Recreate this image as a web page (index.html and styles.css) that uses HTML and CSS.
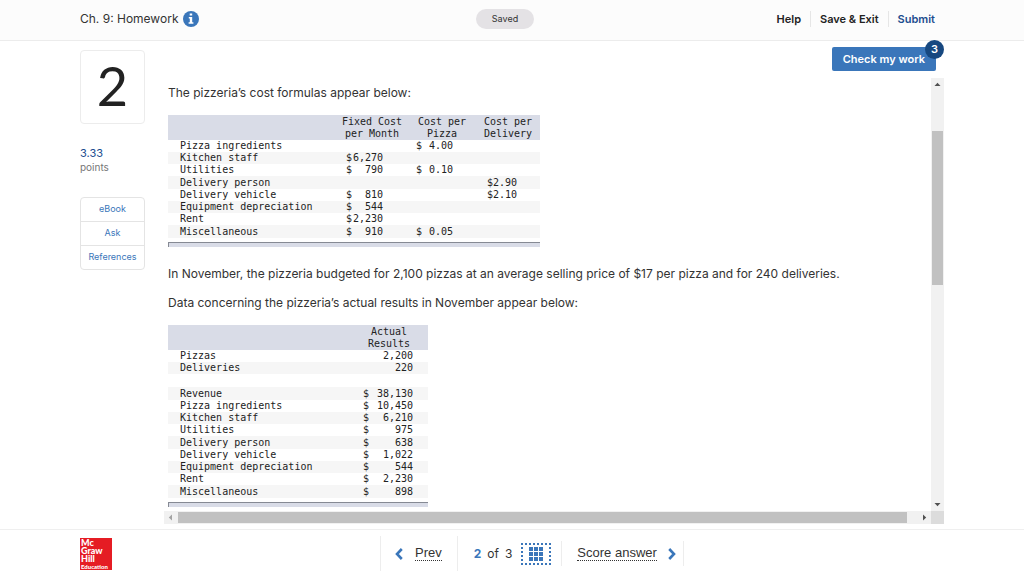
FILE: index.html
```html
<!DOCTYPE html>
<html lang="en">
<head>
<meta charset="utf-8">
<title>Ch. 9: Homework</title>
<link rel="stylesheet" href="styles.css">
</head>
<body>
<header class="topbar">
  <div class="title">
    <h1>Ch. 9: Homework</h1>
    <button class="info" type="button" aria-label="Assignment information">
      <svg viewBox="0 0 16 16" width="16" height="16"><circle cx="8" cy="8" r="8" fill="#3a76ba"/><path d="M6.7 2.6h2.5v2H6.7zM5.8 6h3.4v5.3h1.2v1.5H5.6v-1.5h1.2V7.5h-1z" fill="#fff"/></svg>
    </button>
  </div>
  <span class="saved">Saved</span>
  <nav class="actions">
    <a href="#help">Help</a>
    <a href="#exit">Save &amp; Exit</a>
    <a href="#submit" class="submit">Submit</a>
  </nav>
</header>

<main class="main">
  <aside class="side">
    <div class="number">2</div>
    <div class="points"><strong>3.33</strong><span>points</span></div>
    <nav class="tools">
      <a href="#ebook">eBook</a>
      <a href="#ask">Ask</a>
      <a href="#references">References</a>
    </nav>
  </aside>

  <section class="work">
    <div class="check-row">
      <button class="check" type="button">Check my work<span class="badge">3</span></button>
    </div>
    <div class="pane">
      <div class="question">
        <p>The pizzeria’s cost formulas appear below:</p>
        <table class="ledger costs">
          <colgroup><col class="c-name"><col class="c-month"><col class="c-pizza"><col class="c-delivery"></colgroup>
          <thead>
            <tr><th></th><th>Fixed Cost<br>per Month</th><th>Cost per<br>Pizza</th><th>Cost per<br>Delivery</th></tr>
          </thead>
          <tbody>
            <tr><td>Pizza ingredients</td><td></td><td><div class="money"><span>$</span><span>4.00</span></div></td><td></td></tr>
            <tr><td>Kitchen staff</td><td><div class="money"><span>$</span><span>6,270</span></div></td><td></td><td></td></tr>
            <tr><td>Utilities</td><td><div class="money"><span>$</span><span>790</span></div></td><td><div class="money"><span>$</span><span>0.10</span></div></td><td></td></tr>
            <tr><td>Delivery person</td><td></td><td></td><td><div class="money"><span>$</span><span>2.90</span></div></td></tr>
            <tr><td>Delivery vehicle</td><td><div class="money"><span>$</span><span>810</span></div></td><td></td><td><div class="money"><span>$</span><span>2.10</span></div></td></tr>
            <tr><td>Equipment depreciation</td><td><div class="money"><span>$</span><span>544</span></div></td><td></td><td></td></tr>
            <tr><td>Rent</td><td><div class="money"><span>$</span><span>2,230</span></div></td><td></td><td></td></tr>
            <tr><td>Miscellaneous</td><td><div class="money"><span>$</span><span>910</span></div></td><td><div class="money"><span>$</span><span>0.05</span></div></td><td></td></tr>
          </tbody>
        </table>
        <div class="rule costs"></div>
        <p>In November, the pizzeria budgeted for 2,100 pizzas at an average selling price of $17 per pizza and for 240 deliveries.</p>
        <p>Data concerning the pizzeria’s actual results in November appear below:</p>
        <table class="ledger results">
          <colgroup><col class="c-item"><col class="c-actual"></colgroup>
          <thead>
            <tr><th></th><th>Actual<br>Results</th></tr>
          </thead>
          <tbody>
            <tr><td>Pizzas</td><td><div class="money"><span></span><span>2,200</span></div></td></tr>
            <tr><td>Deliveries</td><td><div class="money"><span></span><span>220</span></div></td></tr>
            <tr class="spacer"><td></td><td></td></tr>
            <tr><td>Revenue</td><td><div class="money"><span>$</span><span>38,130</span></div></td></tr>
            <tr><td>Pizza ingredients</td><td><div class="money"><span>$</span><span>10,450</span></div></td></tr>
            <tr><td>Kitchen staff</td><td><div class="money"><span>$</span><span>6,210</span></div></td></tr>
            <tr><td>Utilities</td><td><div class="money"><span>$</span><span>975</span></div></td></tr>
            <tr><td>Delivery person</td><td><div class="money"><span>$</span><span>638</span></div></td></tr>
            <tr><td>Delivery vehicle</td><td><div class="money"><span>$</span><span>1,022</span></div></td></tr>
            <tr><td>Equipment depreciation</td><td><div class="money"><span>$</span><span>544</span></div></td></tr>
            <tr><td>Rent</td><td><div class="money"><span>$</span><span>2,230</span></div></td></tr>
            <tr><td>Miscellaneous</td><td><div class="money"><span>$</span><span>898</span></div></td></tr>
          </tbody>
        </table>
        <div class="rule results"></div>
      </div>
      <div class="bar vertical">
        <svg viewBox="0 0 13 13" width="13" height="13"><path d="M3.5 8 6.5 4.8 9.5 8z" fill="#505050"/></svg>
        <div class="track"><div class="thumb"></div></div>
        <svg viewBox="0 0 13 13" width="13" height="13"><path d="M3.5 5h6l-3 3.2z" fill="#505050"/></svg>
      </div>
      <div class="bar horizontal">
        <svg viewBox="0 0 13 13" width="13" height="13"><path d="M8 3.5v6L4.8 6.5z" fill="#a3a3a3"/></svg>
        <div class="track"><div class="thumb"></div></div>
        <svg viewBox="0 0 13 13" width="13" height="13"><path d="M5 3.5v6l3.2-3z" fill="#505050"/></svg>
      </div>
      <div class="corner"></div>
    </div>
  </section>
</main>

<footer class="footer">
  <div class="brand"><span>Mc</span><span>Graw</span><span>Hill</span><small>Education</small></div>
  <nav class="pager">
    <a class="prev" href="#prev">
      <svg viewBox="0 0 8 12" width="8" height="12"><path d="M6.8 1 2 6l4.8 5" fill="none" stroke="#3a76ba" stroke-width="2.6"/></svg>
      <span class="dotted">Prev</span>
    </a>
    <div class="pages">
      <div class="count"><strong>2</strong><span>of</span><span>3</span></div>
      <button class="grid-button" type="button" aria-label="Question list">
        <svg viewBox="0 0 14 14" width="14" height="14" fill="#3a76ba"><path d="M0 0h4v4H0zM5 0h4v4H5zM10 0h4v4h-4zM0 5h4v4H0zM5 5h4v4H5zM10 5h4v4h-4zM0 10h4v4H0zM5 10h4v4H5zM10 10h4v4h-4z"/></svg>
      </button>
    </div>
    <a class="next" href="#score">
      <span class="dotted">Score answer</span>
      <svg viewBox="0 0 8 12" width="8" height="12"><path d="M1.2 1 6 6l-4.8 5" fill="none" stroke="#3a76ba" stroke-width="2.6"/></svg>
    </a>
  </nav>
</footer>
</body>
</html>
```
FILE: styles.css
```css
* { box-sizing: border-box; }
body {
  margin: 0;
  min-height: 100vh;
  display: flex;
  flex-direction: column;
  background: #fff;
  color: #333;
  font: 12px/16px Inter, "Open Sans", sans-serif;
}
a { color: inherit; text-decoration: none; }
button { font: inherit; cursor: pointer; }
svg { display: block; flex: none; }

.topbar {
  display: grid;
  grid-template-columns: 1fr auto 1fr;
  align-items: center;
  height: 41px;
  padding: 0 80px 2px;
  background: #fcfcfc;
  border-bottom: 1px solid #ececec;
}
.title { display: flex; align-items: center; gap: 5px; }
.title h1 { margin: 0; font-size: 12px; font-weight: 400; line-height: 16px; }
.info { padding: 0; border: 0; background: none; }
.saved {
  margin-right: 14px;
  padding: 2px 16px;
  border-radius: 10px;
  background: #e4e2e5;
  font-size: 9px;
}
.actions { display: flex; justify-content: flex-end; font-size: 11px; font-weight: 600; color: #222; }
.actions a { padding: 0 9px; border-right: 1px solid #e6e6e6; }
.actions .submit { border-right: 0; color: #1c4d8f; }

.main { flex: 1; display: flex; gap: 19px; padding: 0 80px 5px; }

.side { width: 65px; flex: none; padding-top: 9px; }
.number {
  height: 74px;
  border: 1px solid #ececec;
  border-radius: 4px;
  color: #222;
  font: 54px/70px Lato, sans-serif;
  text-align: center;
}
.points { display: flex; flex-direction: column; margin: 22px 0 23px; line-height: 14px; font-size: 10px; color: #777; }
.points strong { font-size: 11px; font-weight: 400; color: #1c4d8f; }
.tools { border: 1px solid #e4e4e4; border-radius: 4px; font-size: 9px; line-height: 22px; color: #3a76ba; text-align: center; }
.tools a { display: block; padding-bottom: 1px; }
.tools a + a { border-top: 1px solid #e4e4e4; }

.work { flex: 1; min-width: 0; display: flex; flex-direction: column; }
.check-row { display: flex; justify-content: flex-end; padding: 6px 8px 7px 0; }
.check {
  position: relative;
  height: 24px;
  padding: 0 11px;
  border: 0;
  border-radius: 2px;
  background: #3a76ba;
  color: #fff;
  font-size: 11px;
  font-weight: 600;
}
.badge {
  position: absolute;
  top: -7px;
  right: -8px;
  width: 19px;
  height: 19px;
  border-radius: 50%;
  background: #174880;
  font-size: 11px;
  line-height: 18px;
}

.pane { flex: 1; display: grid; grid-template-columns: 1fr 13px; grid-template-rows: 1fr 13px; }
.question { padding: 0 4px; }
.question p { margin: 0 0 13px; color: #333; }
.question p:first-child { padding-top: 7px; margin-bottom: 14px; }

.ledger {
  border-collapse: collapse;
  table-layout: fixed;
  font: 10px/12px "DejaVu Sans Mono", monospace;
  color: #222;
}
.costs { width: 372px; }
.results { width: 260px; }
.c-name { width: 168px; }
.c-month { width: 72px; }
.c-pizza { width: 68px; }
.c-delivery { width: 64px; }
.c-item { width: 182px; }
.c-actual { width: 78px; }
.ledger th { padding: 0; height: 25px; background: #d9dce7; font-weight: 400; white-space: nowrap; }
.ledger td { padding: 0 0 0 12px; height: 12px; white-space: nowrap; }
.ledger tbody tr:nth-child(4n) td, .ledger .spacer td { height: 13px; }
.ledger tbody tr:nth-child(even) { background: #f6f6f6; }
.money { display: flex; justify-content: space-between; }
.costs td:nth-child(2) { padding: 0 25px 0 10px; }
.costs td:nth-child(3) { padding: 0 23px 0 8px; }
.costs td:nth-child(4) { padding: 0 23px 0 11px; }
.results td:nth-child(2) { padding: 0 15px 0 13px; }
.rule { height: 5px; margin: 4px 0 19px; border-top: 1px solid #868a94; border-left: 1px solid #868a94; background: #d9dce7; }
.rule.results { margin-bottom: 3px; }
.question p + table.results { margin-top: 14px; }

.bar { display: flex; background: #f1f1f1; }
.vertical { flex-direction: column; }
.track { flex: 1; }
.thumb { background: #c1c1c1; }
.vertical .track { padding: 40px 1px 0; }
.vertical .thumb { height: 154px; }
.horizontal .track { padding: 1px 11px 1px 1px; }
.horizontal .thumb { height: 11px; }
.corner { background: #dcdcdc; }

.footer {
  display: flex;
  height: 47px;
  padding: 0 80px;
  border-top: 1px solid #efefef;
}
.brand {
  display: flex;
  flex-direction: column;
  width: 32px;
  height: 32px;
  margin-top: 8px;
  padding: 1px 1px 0;
  background: #e51c24;
  color: #fff;
  font: 900 9px/8px Lato, sans-serif;
}
.brand small { font-size: 6px; line-height: 7px; }
.pager { flex: 1; display: flex; align-items: center; margin: 4px 0 3px 268px; }
.prev, .next { display: flex; align-items: center; font: 13px/14px "Liberation Sans", Arial, sans-serif; }
.dotted { border-bottom: 1px dotted #333; }
.prev { gap: 12px; height: 35px; padding: 0 15px 0 14px; border-left: 1px solid #ededed; border-right: 1px solid #ededed; }
.pages { display: flex; align-items: center; gap: 9px; padding: 0 10px 0 16px; }
.count { display: flex; gap: 6px; }
.count strong { color: #3a76ba; }
.grid-button { padding: 2px 6px; border: 2px dotted #3a76ba; background: #fff; }
.next { gap: 11px; height: 25px; padding: 0 7px 0 15px; border-left: 1px solid #ededed; border-right: 1px solid #ededed; }
```
